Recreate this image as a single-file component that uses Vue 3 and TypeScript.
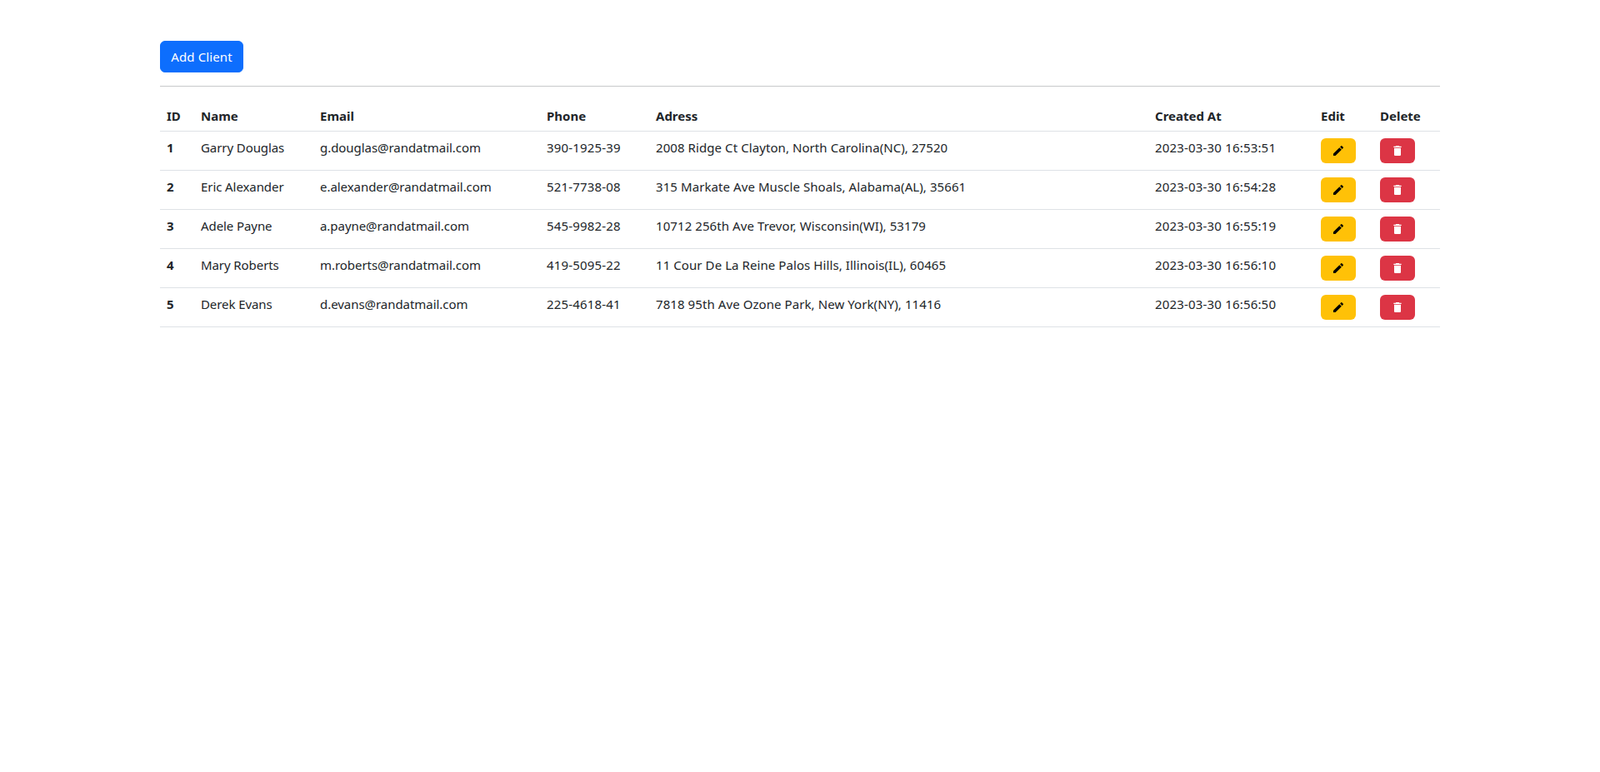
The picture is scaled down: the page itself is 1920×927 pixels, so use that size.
<script setup lang="ts">
interface Client {
  id: number
  name: string
  email: string
  phone: string
  address: string
  createdAt: string
}

const clients: Client[] = [
  { id: 1, name: 'Garry Douglas', email: 'g.douglas@randatmail.com', phone: '390-1925-39', address: '2008 Ridge Ct Clayton, North Carolina(NC), 27520', createdAt: '2023-03-30 16:53:51' },
  { id: 2, name: 'Eric Alexander', email: 'e.alexander@randatmail.com', phone: '521-7738-08', address: '315 Markate Ave Muscle Shoals, Alabama(AL), 35661', createdAt: '2023-03-30 16:54:28' },
  { id: 3, name: 'Adele Payne', email: 'a.payne@randatmail.com', phone: '545-9982-28', address: '10712 256th Ave Trevor, Wisconsin(WI), 53179', createdAt: '2023-03-30 16:55:19' },
  { id: 4, name: 'Mary Roberts', email: 'm.roberts@randatmail.com', phone: '419-5095-22', address: '11 Cour De La Reine Palos Hills, Illinois(IL), 60465', createdAt: '2023-03-30 16:56:10' },
  { id: 5, name: 'Derek Evans', email: 'd.evans@randatmail.com', phone: '225-4618-41', address: '7818 95th Ave Ozone Park, New York(NY), 11416', createdAt: '2023-03-30 16:56:50' },
]
</script>

<template>
  <div class="container">
    <button class="btn btn-primary" type="button">Add Client</button>
    <hr />
    <table class="table">
      <colgroup>
        <col class="col-id" />
        <col class="col-name" />
        <col class="col-email" />
        <col class="col-phone" />
        <col class="col-address" />
        <col class="col-created" />
        <col class="col-edit" />
        <col class="col-delete" />
      </colgroup>
      <thead>
        <tr>
          <th>ID</th>
          <th>Name</th>
          <th>Email</th>
          <th>Phone</th>
          <th>Adress</th>
          <th>Created At</th>
          <th>Edit</th>
          <th>Delete</th>
        </tr>
      </thead>
      <tbody>
        <tr v-for="c in clients" :key="c.id">
          <th>{{ c.id }}</th>
          <td class="name">{{ c.name }}</td>
          <td class="email">{{ c.email }}</td>
          <td class="digits">{{ c.phone }}</td>
          <td class="address">{{ c.address }}</td>
          <td class="digits">{{ c.createdAt }}</td>
          <td>
            <button class="btn-sm btn-warning" type="button" aria-label="Edit">
              <svg viewBox="0 0 24 24" width="16" height="16" fill="#000">
                <path d="M3 17.25V21h3.75L17.81 9.94l-3.75-3.75L3 17.25zM20.71 7.04c.39-.39.39-1.02 0-1.41l-2.34-2.34c-.39-.39-1.02-.39-1.41 0l-1.83 1.83 3.75 3.75 1.83-1.83z" />
              </svg>
            </button>
          </td>
          <td>
            <button class="btn-sm btn-danger" type="button" aria-label="Delete">
              <svg viewBox="0 0 24 24" width="16" height="16" fill="#fff">
                <path d="M6 19c0 1.1.9 2 2 2h8c1.1 0 2-.9 2-2V7H6v12zM19 4h-3.5l-1-1h-5l-1 1H5v2h14V4z" />
              </svg>
            </button>
          </td>
        </tr>
      </tbody>
    </table>
  </div>
</template>

<style>
body {
  background: #fff;
}
</style>

<style scoped>
.container {
  width: 1536px;
  margin: 0 auto;
  padding-top: 49px;
  font-family: "Noto Sans", "Open Sans", sans-serif;
  font-size: 15px;
  line-height: 24px;
  color: #212529;
}

.btn {
  display: block;
  width: 100px;
  height: 38px;
  padding: 0;
  border: 1px solid #0d6efd;
  border-radius: 6px;
  font: inherit;
  letter-spacing: 0.1px;
}

.btn-primary {
  background: #0d6efd;
  color: #fff;
}

hr {
  margin: 16px 0;
  border: 0;
  border-top: 1px solid #c8c9ca;
}

.table {
  width: 100%;
  table-layout: fixed;
  border-collapse: collapse;
}

.col-id { width: 41px; }
.col-name { width: 143px; }
.col-email { width: 272px; }
.col-phone { width: 131px; }
.col-address { width: 599px; }
.col-created { width: 199px; }
.col-edit { width: 71px; }
.col-delete { width: 80px; }

th,
td {
  padding: 7px 8px 8px;
  text-align: left;
  vertical-align: top;
  border-bottom: 1px solid #dee2e6;
  white-space: nowrap;
}

th {
  font-weight: 700;
}

thead th {
  padding: 9px 8px 7px;
  line-height: 21px;
}

tbody th {
  padding-top: 7px;
}

.name {
  letter-spacing: -0.08px;
}

.email {
  letter-spacing: -0.05px;
}

.digits {
  letter-spacing: 0.18px;
}

.address {
  letter-spacing: 0.08px;
}

.btn-sm {
  width: 42px;
  height: 30px;
  margin-top: 1px;
  padding: 0;
  border: 0;
  border-radius: 6px;
  display: flex;
  align-items: center;
  justify-content: center;
}

.btn-warning {
  background: #ffc107;
}

.btn-danger {
  background: #dc3545;
}
</style>
